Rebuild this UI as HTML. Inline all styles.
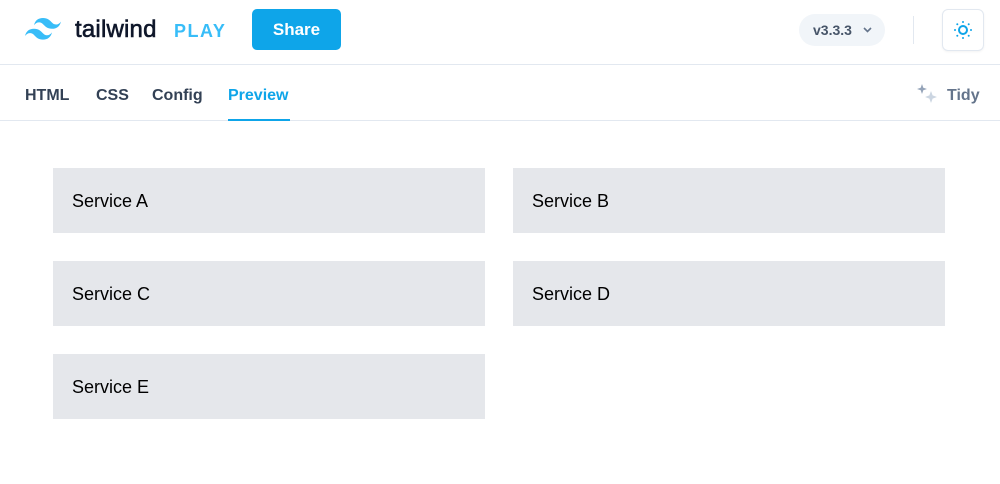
<!DOCTYPE html>
<html><head><style>
*{margin:0;padding:0;box-sizing:border-box}
body{width:1000px;height:484px;background:#fff;font-family:"Liberation Sans",sans-serif;position:relative;overflow:hidden}
.hdr{position:absolute;left:0;top:0;width:1000px;height:65px;border-bottom:1px solid #e2e8f0}
.tabs{position:absolute;left:0;top:65px;width:1000px;height:56px;border-bottom:1px solid #e2e8f0}
.tab{position:absolute;top:22px;font-size:16px;font-weight:bold;color:#334155}
.box{position:absolute;background:#e5e7eb;width:432px;height:65px;font-size:18px;color:#000;padding:23px 19px 0}
</style></head><body>
<div class="hdr">
<svg style="position:absolute;left:25px;top:18px" width="36" height="22" viewBox="0 0 54 33"><path fill="#38bdf8" fill-rule="evenodd" d="M27 0c-7.2 0-11.7 3.6-13.5 10.8 2.7-3.6 5.85-4.95 9.450-4.05 2.054.513 3.522 2.004 5.147 3.653C30.744 13.09 33.808 16.2 40.5 16.2c7.2 0 11.7-3.6 13.5-10.8-2.7 3.6-5.85 4.95-9.45 4.05-2.054-.513-3.522-2.004-5.147-3.653C36.756 3.11 33.692 0 27 0zM13.5 16.2C6.3 16.2 1.8 19.8 0 27c2.7-3.6 5.850-4.95 9.450-4.05 2.054.514 3.522 2.004 5.147 3.653C17.244 29.29 20.308 32.4 27 32.4c7.2 0 11.7-3.6 13.5-10.8-2.7 3.6-5.85 4.95-9.45 4.05-2.054-.513-3.522-2.004-5.147-3.653C23.256 19.31 20.192 16.2 13.5 16.2z"/></svg>
<div style="position:absolute;left:75px;top:16px;font-size:24px;font-weight:normal;-webkit-text-stroke:0.6px #0f172a;color:#0f172a;letter-spacing:0.2px">tailwind</div>
<div style="position:absolute;left:174px;top:21px;font-size:18px;font-weight:bold;color:#38bdf8;letter-spacing:1.5px">PLAY</div>
<div style="position:absolute;left:252px;top:9px;width:89px;height:41px;background:#0ea5e9;border-radius:5px;color:#fff;font-weight:bold;font-size:17px;text-align:center;line-height:41px">Share</div>
<div style="position:absolute;left:799px;top:14px;width:86px;height:32px;background:#f1f5f9;border-radius:16px;color:#475569;font-size:14px;font-weight:bold;line-height:32px;padding-left:14px">v3.3.3<svg style="position:absolute;left:64px;top:13px" width="9" height="6" viewBox="0 0 9 6"><path d="M1 1l3.5 3.5L8 1" fill="none" stroke="#64748b" stroke-width="1.6"/></svg></div>
<div style="position:absolute;left:913px;top:16px;width:1px;height:28px;background:#e2e8f0"></div>
<div style="position:absolute;left:942px;top:9px;width:42px;height:42px;border:1px solid #e2e8f0;border-radius:6px;box-shadow:0 1px 2px rgba(0,0,0,.05)">
<svg width="40" height="40" viewBox="0 0 40 40"><circle cx="20" cy="20" r="4" fill="none" stroke="#0ea5e9" stroke-width="2"/><g fill="#0ea5e9"><circle cx="20" cy="12" r="1"/><circle cx="20" cy="28" r="1"/><circle cx="12" cy="20" r="1"/><circle cx="28" cy="20" r="1"/><circle cx="14.3" cy="14.3" r="1"/><circle cx="25.7" cy="25.7" r="1"/><circle cx="14.3" cy="25.7" r="1"/><circle cx="25.7" cy="14.3" r="1"/></g></svg></div>
</div>
<div class="tabs">
<div class="tab" style="left:25px">HTML</div>
<div class="tab" style="left:96px">CSS</div>
<div class="tab" style="left:152px">Config</div>
<div class="tab" style="left:228px;color:#0ea5e9">Preview</div>
<div style="position:absolute;left:228px;top:54px;width:62px;height:2px;background:#0ea5e9"></div>
<svg style="position:absolute;left:917px;top:18px" width="22" height="22" viewBox="0 0 22 22"><path d="M5 1l1.3 3.7L10 6 6.3 7.3 5 11 3.7 7.3 0 6l3.7-1.3z" fill="#94a3b8"/><path d="M14 8l1.6 4.4L20 14l-4.4 1.6L14 20l-1.6-4.4L8 14l4.4-1.6z" fill="#cbd5e1"/></svg>
<div class="tab" style="left:947px;color:#64748b">Tidy</div>
</div>
<div class="box" style="left:53px;top:168px">Service A</div>
<div class="box" style="left:513px;top:168px">Service B</div>
<div class="box" style="left:53px;top:261px">Service C</div>
<div class="box" style="left:513px;top:261px">Service D</div>
<div class="box" style="left:53px;top:354px">Service E</div>
</body></html>
